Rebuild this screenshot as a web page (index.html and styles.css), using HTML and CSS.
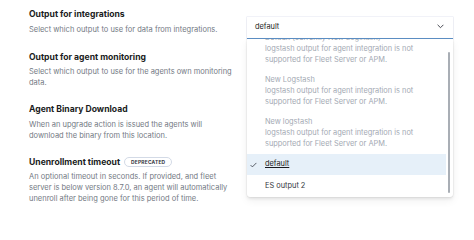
FILE: index.html
```html
<!DOCTYPE html>
<html lang="en">
<head>
<meta charset="utf-8">
<title>Fleet settings</title>
<link rel="stylesheet" href="styles.css">
</head>
<body>
<div class="page">
  <div class="labels">
    <section class="group">
      <h3 class="title">Output for integrations</h3>
      <p class="desc">Select which output to use for data from integrations.</p>
    </section>
    <section class="group">
      <h3 class="title">Output for agent monitoring</h3>
      <p class="desc">Select which output to use for the agents own monitoring data.</p>
    </section>
    <section class="group">
      <h3 class="title">Agent Binary Download</h3>
      <p class="desc">When an upgrade action is issued the agents will download the binary from this location.</p>
    </section>
    <section class="group">
      <div class="title-row">
        <h3 class="title">Unenrollment timeout</h3>
        <span class="badge">Deprecated</span>
      </div>
      <p class="desc">An optional timeout in seconds. If provided, and fleet server is below version 8.7.0, an agent will automatically unenroll after being gone for this period of time.</p>
    </section>
  </div>
  <div class="field">
    <div class="select">
      <span class="value">default</span>
      <svg class="chevron" width="7" height="5" viewBox="0 0 7 5"><path d="M0.6 0.8 L3.5 3.7 L6.4 0.8" fill="none" stroke="#343741" stroke-width="0.9"/></svg>
    </div>
    <div class="menu">
      <div class="scroller">
        <ul class="options">
          <li class="option disabled">
            <span class="opt-title">Default (currently New Logstash)</span>
            <span class="opt-desc">logstash output for agent integration is not supported for Fleet Server or APM.</span>
          </li>
          <li class="option disabled">
            <span class="opt-title">New Logstash</span>
            <span class="opt-desc">logstash output for agent integration is not supported for Fleet Server or APM.</span>
          </li>
          <li class="option disabled">
            <span class="opt-title">New logstash</span>
            <span class="opt-desc">logstash output for agent integration is not supported for Fleet Server or APM.</span>
          </li>
          <li class="option single selected">
            <svg class="check" width="7" height="6" viewBox="0 0 7 6"><path d="M0.6 3.1 L2.4 4.9 L6.4 0.9" fill="none" stroke="#343741" stroke-width="0.8"/></svg>
            <span class="opt-label">default</span>
          </li>
          <li class="option single">
            <span class="opt-label">ES output 2</span>
          </li>
        </ul>
      </div>
      <div class="track"><div class="thumb"></div></div>
    </div>
  </div>
</div>
</body>
</html>
```

FILE: styles.css
```css
* { box-sizing: border-box; }
html, body {
  margin: 0;
  padding: 0;
  background: #ffffff;
}
body {
  width: 474px;
  height: 210px;
  overflow: hidden;
  font-family: Inter, "Noto Sans", sans-serif;
  color: #1a1c21;
}
.page {
  display: flex;
  gap: 13px;
  padding-left: 29px;
}
.labels {
  width: 205px;
  padding-top: 8.4px;
  display: flex;
  flex-direction: column;
  gap: 15px;
}
.group { margin: 0; }
.group:first-child { margin-bottom: 1px; }
.title {
  margin: 0;
  font-size: 8.6px;
  line-height: 12px;
  font-weight: 700;
  color: #1a1c21;
}
.title-row {
  display: flex;
  align-items: center;
  gap: 4px;
}
.badge {
  display: inline-flex;
  align-items: center;
  height: 10px;
  padding: 0 6px;
  border: 1px solid #d3dae6;
  border-radius: 5px;
  font-size: 4.9px;
  font-weight: 700;
  letter-spacing: 0.2px;
  text-transform: uppercase;
  color: #343741;
  background: #fff;
}
.desc {
  margin: 3.4px 0 0;
  font-size: 7.5px;
  line-height: 11px;
  color: #737983;
}
.field {
  position: relative;
  width: 206px;
  padding-top: 17px;
}
.select {
  height: 22px;
  display: flex;
  align-items: center;
  justify-content: space-between;
  padding: 0 8px 2px 8px;
  background: #fff;
  box-shadow: 0 0 0 0.5px rgba(17, 43, 134, 0.12), 0 1px 2px rgba(0, 0, 0, 0.05);
  border-bottom: 1.5px solid #5f93ca;
  font-size: 7.4px;
  color: #1a1c21;
}
.chevron { display: block; margin-right: 1px; }
.menu {
  position: absolute;
  left: 0;
  top: 39px;
  width: 206px;
  height: 158px;
  display: flex;
  background: #fff;
  border-radius: 0 0 3px 3px;
  box-shadow: 0 0 0 0.5px rgba(0, 0, 0, 0.06), 0 2px 3px rgba(0, 0, 0, 0.08), 0 4px 8px rgba(0, 0, 0, 0.06);
  overflow: hidden;
}
.scroller {
  flex: 1;
  overflow: hidden;
}
.options {
  list-style: none;
  margin: -10.9px 0 0;
  padding: 0;
}
.option {
  position: relative;
  padding: 4.2px 8px 4.2px 18px;
  font-size: 7.4px;
}
.option.disabled { color: #a3a9b3; }
.opt-title {
  display: block;
  line-height: 11px;
}
.opt-desc {
  display: block;
  margin-top: 1px;
  line-height: 10.8px;
}
.option.single {
  padding-top: 5.3px;
  padding-bottom: 5.3px;
  line-height: 10.8px;
  color: #343741;
}
.option.selected { background: #e6f0f9; }
.opt-label { display: block; }
.selected .opt-label {
  text-decoration: underline;
  color: #1a1c21;
}
.check {
  position: absolute;
  left: 3px;
  top: 8px;
}
.track {
  width: 7px;
  padding: 12.7px 2px 4px 1.5px;
}
.thumb {
  width: 2.6px;
  height: 100%;
  background: #a9aeb5;
  border-radius: 1px;
}
```
